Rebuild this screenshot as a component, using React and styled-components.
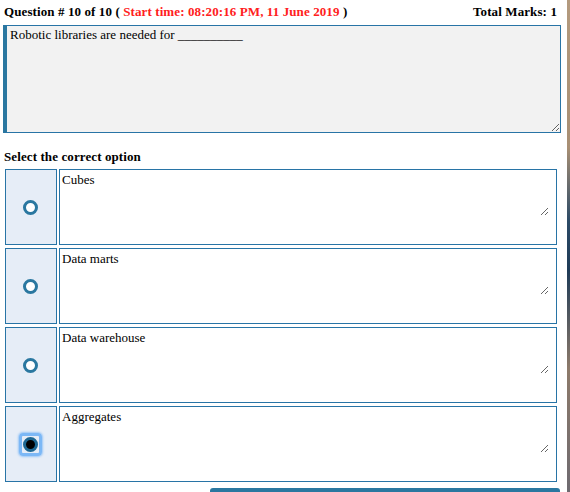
import React from 'react';
import styled, { createGlobalStyle } from 'styled-components';

const GlobalStyle = createGlobalStyle`
  html, body {
    margin: 0;
    padding: 0;
    background: #ffffff;
  }
  body {
    font-family: "Liberation Serif", "Times New Roman", serif;
    color: #000;
    overflow: hidden;
  }
`;

const options = [
  { id: 1, text: 'Cubes' },
  { id: 2, text: 'Data marts' },
  { id: 3, text: 'Data warehouse' },
  { id: 4, text: 'Aggregates' },
];

export default function App () {
  const [picked, setPicked] = React.useState(4);

  return (
    <Screen>
      <GlobalStyle />
      <Quiz>
        <Header>
          <span>
            Question # 10 of 10 ( <Time>Start time: 08:20:16 PM, 11 June 2019</Time> )
          </span>
          <span>Total Marks: 1</span>
        </Header>
        <QuestionBox readOnly value="Robotic libraries are needed for __________" />
        <Prompt>Select the correct option</Prompt>
        <OptionList>
          {options.map(o => (
            <OptionRow key={o.id}>
              <RadioCell>
                <FocusRing $focused={picked === o.id}>
                  <Radio
                    type="radio"
                    name="answer"
                    checked={picked === o.id}
                    onChange={() => setPicked(o.id)}
                  />
                </FocusRing>
              </RadioCell>
              <AnswerCell>
                <AnswerBox readOnly value={o.text} />
              </AnswerCell>
            </OptionRow>
          ))}
        </OptionList>
        <SubmitEdge />
      </Quiz>
      <Desktop />
    </Screen>
  );
}

const Screen = styled.div`
  display: flex;
  width: 570px;
  height: 492px;
  overflow: hidden;
`;

const Quiz = styled.div`
  flex: 1;
  display: flex;
  flex-direction: column;
  padding: 0 6px 0 3px;
`;

const Desktop = styled.div`
  width: 3px;
  flex-shrink: 0;
  background: linear-gradient(
    to bottom,
    #b39a7e 0%,
    #a88f74 30%,
    #2c4a66 45%,
    #1f3b57 55%,
    #8d7a6a 75%,
    #6e6a70 100%
  );
`;

const Header = styled.div`
  display: flex;
  justify-content: space-between;
  align-items: baseline;
  height: 24px;
  padding: 4px 4px 0 1px;
  box-sizing: border-box;
  font-size: 13px;
  font-weight: bold;
  letter-spacing: 0.1px;
`;

const Time = styled.span`
  color: #ff2020;
`;

const QuestionBox = styled.textarea`
  display: block;
  box-sizing: border-box;
  width: 558px;
  height: 108px;
  margin: 1px 0 0;
  padding: 1px 3px;
  border: 1px solid #2874a6;
  border-left: 4px solid #2a77a0;
  background: #f2f2f2;
  font-family: "Liberation Serif", "Times New Roman", serif;
  font-size: 13px;
  color: #000;
  outline: none;
  resize: vertical;
`;

const Prompt = styled.div`
  margin: 16px 0 0 1px;
  height: 20px;
  font-size: 13px;
  font-weight: bold;
  letter-spacing: 0.1px;
`;

const OptionList = styled.div`
  display: flex;
  flex-direction: column;
  gap: 3px;
  margin-left: 2px;
  width: 552px;
`;

const OptionRow = styled.div`
  display: grid;
  grid-template-columns: 52px 1fr;
  gap: 2px;
  height: 76px;
`;

const RadioCell = styled.div`
  display: flex;
  align-items: center;
  justify-content: center;
  box-sizing: border-box;
  border: 1px solid #2874a6;
  background: #e6edf7;
  padding-right: 1px;
`;

const FocusRing = styled.span`
  display: flex;
  align-items: center;
  justify-content: center;
  box-sizing: border-box;
  width: 23px;
  height: 23px;
  border-radius: 4px;
  border: 3px solid ${p => (p.$focused ? '#7cb8f6' : 'transparent')};
  box-shadow: ${p => (p.$focused ? '0 0 2px 1px rgba(124,184,246,0.7)' : 'none')};
`;

const Radio = styled.input`
  appearance: none;
  -webkit-appearance: none;
  box-sizing: border-box;
  width: 15px;
  height: 15px;
  margin: 0;
  border-radius: 50%;
  border: 3px solid #2a77a0;
  background: #fff;
  outline: none;

  &:checked {
    background: #000;
    border-color: #1d6792;
  }
`;

const AnswerCell = styled.div`
  box-sizing: border-box;
  border: 1px solid #2874a6;
  background: #fff;
  padding: 0 7px 0 0;
`;

const AnswerBox = styled.textarea`
  display: block;
  box-sizing: border-box;
  width: 100%;
  height: 46px;
  margin: 0;
  padding: 2px 2px;
  border: none;
  background: #fff;
  font-family: "Liberation Serif", "Times New Roman", serif;
  font-size: 13px;
  color: #000;
  outline: none;
`;

const SubmitEdge = styled.div`
  margin: 6px 0 0 207px;
  width: 350px;
  height: 4px;
  border-radius: 3px 3px 0 0;
  background: #2a77a0;
`;
